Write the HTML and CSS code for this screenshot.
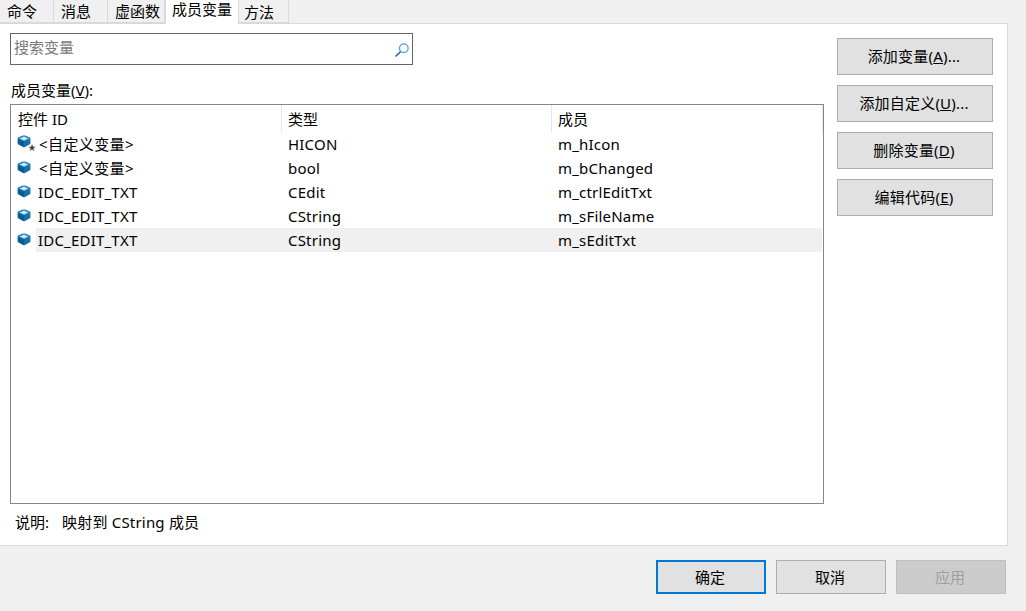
FILE: index.html
```html
<!DOCTYPE html>
<html lang="zh">
<head>
<meta charset="utf-8">
<title>成员变量</title>
<link rel="stylesheet" href="styles.css">
</head>
<body>
<svg class="defs" width="0" height="0" aria-hidden="true">
  <symbol id="cube" viewBox="0 0 14 13">
    <path d="M.6 3.6 C.6 3 1 2.6 1.6 2.3L6 .6c.7-.3 1.3-.3 2 0l4.4 1.7c.6.3 1 .7 1 1.3v4.6c0 .7-.4 1.1-1 1.4L8 11.9c-.7.3-1.3.3-2 0L1.6 9.6c-.6-.3-1-.7-1-1.4z" fill="#1570aa"/>
    <path d="M1.2 3.4 7 1l5.8 2.4L7 6.2z" fill="#62aedb"/>
    <path d="M3.4 3.5 7 2l3.4 1.5L7 5z" fill="#dbeffa"/>
    <path d="M7 6.4v5.4L1 9V3.6z" fill="#0d5c92"/>
  </symbol>
</svg>
<div class="dialog">
  <nav class="tabs">
    <span class="tab t1">命令</span>
    <span class="tab t2">消息</span>
    <span class="tab t3">虚函数</span>
    <span class="tab active">成员变量</span>
    <span class="tab t5">方法</span>
  </nav>
  <main class="panel">
    <div class="left">
      <div class="search">
        <span class="placeholder">搜索变量</span>
        <svg class="mag" width="16" height="16" viewBox="0 0 16 16">
          <circle cx="9.8" cy="6.2" r="4.3" fill="none" stroke="#4aa3de" stroke-width="1.3"/>
          <path d="M6.6 9.6 1.5 14.5" stroke="#2f5fa8" stroke-width="1.5" fill="none"/>
        </svg>
      </div>
      <div class="list-label">成员变量(<u>V</u>):</div>
      <div class="list">
        <div class="head">
          <span class="c1">控件 ID</span><span class="c2">类型</span><span class="c3">成员</span><span class="c4"></span>
        </div>
        <div class="row">
          <span class="c1 icon-cell star"><svg class="cube"><use href="#cube"/></svg><i class="dot">★</i><span class="custom">&lt;自定义变量&gt;</span></span><span class="c2">HICON</span><span class="c3">m_hIcon</span>
        </div>
        <div class="row">
          <span class="c1 icon-cell"><svg class="cube"><use href="#cube"/></svg><span class="custom">&lt;自定义变量&gt;</span></span><span class="c2">bool</span><span class="c3">m_bChanged</span>
        </div>
        <div class="row">
          <span class="c1 icon-cell"><svg class="cube"><use href="#cube"/></svg><span>IDC_EDIT_TXT</span></span><span class="c2">CEdit</span><span class="c3">m_ctrlEditTxt</span>
        </div>
        <div class="row">
          <span class="c1 icon-cell"><svg class="cube"><use href="#cube"/></svg><span>IDC_EDIT_TXT</span></span><span class="c2">CString</span><span class="c3">m_sFileName</span>
        </div>
        <div class="row selected">
          <span class="c1 icon-cell"><svg class="cube"><use href="#cube"/></svg><span class="sel-name">IDC_EDIT_TXT</span></span><span class="c2">CString</span><span class="c3">m_sEditTxt</span>
        </div>
      </div>
      <div class="desc"><span class="desc-key">说明:</span><span class="desc-text">映射到 CString 成员</span></div>
    </div>
    <div class="side">
      <button class="btn">添加变量(<u>A</u>)...</button>
      <button class="btn">添加自定义(<u>U</u>)...</button>
      <button class="btn">删除变量(<u>D</u>)</button>
      <button class="btn">编辑代码(<u>E</u>)</button>
    </div>
  </main>
  <footer class="foot">
    <button class="btn fbtn primary">确定</button>
    <button class="btn fbtn">取消</button>
    <button class="btn fbtn disabled">应用</button>
  </footer>
</div>
</body>
</html>
```
FILE: styles.css
```css
* { box-sizing: border-box; }
html, body { margin: 0; padding: 0; }
body {
  width: 1026px;
  height: 611px;
  overflow: hidden;
  background: #f0f0f0;
  color: #000;
  font-family: "Noto Sans", "Noto Sans CJK SC", sans-serif;
  font-size: 15px;
}
.defs { position: absolute; }
.dialog { display: flex; flex-direction: column; height: 611px; }

.tabs { display: flex; height: 24px; width: 1007px; }
.tab {
  height: 23px;
  padding-left: 7px;
  line-height: 23px;
  background: #f0f0f0;
  border-right: 1px solid #d9d9d9;
  border-bottom: 1px solid #d9d9d9;
}
.t1 { width: 54px; }
.t2 { width: 54px; }
.t3 { width: 57px; }
.t5 { width: 50px; padding-left: 5px; line-height: 24px; }
.active {
  width: 74px;
  height: 24px;
  background: #fff;
  border-left: 1px solid #d9d9d9;
  border-bottom: 0;
  padding-left: 6px;
  line-height: 19px;
}

.panel {
  display: flex;
  width: 1008px;
  height: 523px;
  background: #fff;
  border-right: 1px solid #d9d9d9;
  border-bottom: 1px solid #d9d9d9;
  border-top: 1px solid #d9d9d9;
  margin-top: -1px;
  padding: 9px 14px 0 10px;
  justify-content: space-between;
}
.active { position: relative; z-index: 1; }

.left { width: 814px; display: flex; flex-direction: column; }
.search {
  width: 403px;
  height: 32px;
  border: 1px solid #646464;
  display: flex;
  align-items: center;
  justify-content: space-between;
  padding: 0 2px 0 3px;
}
.placeholder { color: #7a7a7a; line-height: 26px; margin-top: -5px; }
.mag { margin-top: 1px; }

.list-label { height: 39px; padding: 15px 0 0 1px; line-height: 20px; }
.list {
  height: 400px;
  border: 1px solid #828790;
}
.head, .row { display: flex; }
.head { height: 27px; line-height: 28px; }
.head span { display: block; height: 27px; border-right: 1px solid #e5e5e5; padding-left: 7px; }
.head .c1 { width: 271px; }
.head .c2 { width: 270px; padding-left: 6px; }
.head .c3 { width: 271px; padding-left: 6px; }
.head .c4 { width: 0; border: 0; padding: 0; }

.row { height: 24px; line-height: 24px; letter-spacing: .2px; }
.row .c1 { width: 271px; }
.row .c2 { width: 270px; padding-left: 6px; }
.row .c3 { width: 270px; padding-left: 6px; }
.icon-cell { display: flex; align-items: center; padding-left: 6px; position: relative; }
.cube { width: 14px; height: 13px; flex: none; margin-right: 7px; margin-top: -1px; }
.custom { margin-left: 1px; letter-spacing: .4px; }
.star .cube { margin-top: -5px; }
.dot {
  position: absolute;
  left: 17px;
  top: 11px;
  font-style: normal;
  font-size: 8px;
  line-height: 8px;
  color: #444;
}
.selected { width: 811px; }
.selected .c1 { background: linear-gradient(90deg, #fff 25px, #f0f0f0 25px); }
.selected .c2, .selected .c3 { background: #f0f0f0; }

.desc { display: flex; padding: 8px 0 0 5px; line-height: 20px; }
.desc-key { width: 47px; }
.desc-text { letter-spacing: .2px; }

.side { display: flex; flex-direction: column; gap: 10px; width: 156px; padding-top: 5px; }
.btn {
  font: inherit;
  color: #000;
  width: 156px;
  height: 37px;
  background: #e1e1e1;
  border: 1px solid #adadad;
  padding: 0 2px 3px 0;
  border-radius: 0;
  letter-spacing: .2px;
}
.foot {
  display: flex;
  gap: 10px;
  width: 1006px;
  justify-content: flex-end;
  padding-top: 14px;
}
.fbtn { width: 110px; height: 34px; padding: 0 2px 1px 0; letter-spacing: 0; }
.primary { border: 2px solid #0078d7; }
.disabled { background: #cccccc; border-color: #bfbfbf; color: #a0a0a0; }
```
